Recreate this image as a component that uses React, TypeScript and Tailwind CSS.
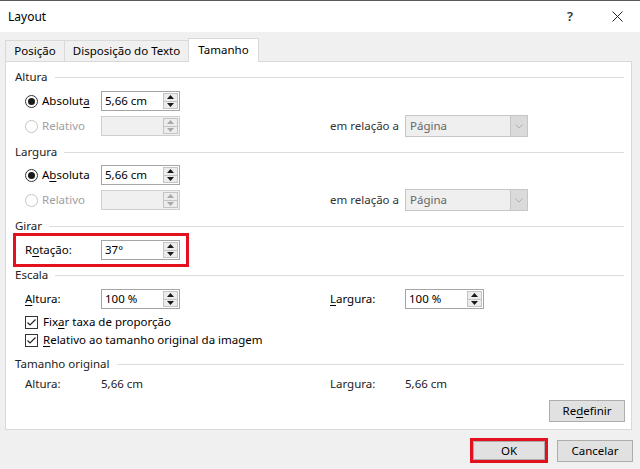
import React from "react";

const font = { fontFamily: '"Noto Sans", "Segoe UI", sans-serif' };

function U({ children }: { children: React.ReactNode }) {
  return <span className="underline underline-offset-2">{children}</span>;
}

function Spinner({ disabled }: { disabled?: boolean }) {
  const fill = disabled ? "#a8a8a8" : "#1a1a1a";
  return (
    <div className="flex h-[16px] w-[15px] flex-col">
      <div className="flex flex-1 items-center justify-center border border-[#c4c4c4] bg-[#ececec]">
        <svg width="7" height="4" viewBox="0 0 7 4">
          <path d="M0 4 L3.5 0 L7 4 Z" fill={fill} />
        </svg>
      </div>
      <div className="-mt-px flex flex-1 items-center justify-center border border-[#c4c4c4] bg-[#ececec]">
        <svg width="7" height="4" viewBox="0 0 7 4">
          <path d="M0 0 L7 0 L3.5 4 Z" fill={fill} />
        </svg>
      </div>
    </div>
  );
}

function SpinInput({ value, disabled }: { value?: string; disabled?: boolean }) {
  return (
    <div
      className={
        disabled
          ? "flex h-[20px] w-[79px] items-center justify-between border border-[#cfcfcf] bg-[#f0f0f0] pl-[4px] pr-[1px]"
          : "flex h-[20px] w-[79px] items-center justify-between border border-[#a5a5a5] bg-white pl-[3px] pr-[1px]"
      }
    >
      <span className="text-black">{value}</span>
      <Spinner disabled={disabled} />
    </div>
  );
}

function Radio({ checked, disabled }: { checked?: boolean; disabled?: boolean }) {
  return (
    <svg width="13" height="13" viewBox="0 0 13 13" className="shrink-0">
      <circle cx="6.5" cy="6.5" r="6" fill="white" stroke={disabled ? "#c4c4c4" : "#333"} />
      {checked && <circle cx="6.5" cy="6.5" r="3.5" fill="#1a1a1a" />}
    </svg>
  );
}

function Check() {
  return (
    <svg width="13" height="13" viewBox="0 0 13 13" className="shrink-0">
      <rect x="0.5" y="0.5" width="12" height="12" fill="white" stroke="#333" />
      <path d="M2.5 6.5 L5 9 L10.5 3.5" fill="none" stroke="#222" strokeWidth="1.2" />
    </svg>
  );
}

function Dropdown() {
  return (
    <div className="-my-px flex h-[22px] w-[123px] items-stretch border border-[#c6c6c6] bg-[#efefef]">
      <span className="flex flex-1 items-center pl-[4px] text-[#666]">Página</span>
      <div className="flex w-[17px] items-center justify-center border-l border-[#c6c6c6] bg-[#dadada]">
        <svg width="8" height="5" viewBox="0 0 8 5">
          <path d="M0.5 0.5 L4 4 L7.5 0.5" fill="none" stroke="#b0b0b0" />
        </svg>
      </div>
    </div>
  );
}

function Heading({ title, className }: { title: string; className?: string }) {
  return (
    <div className={"flex h-[16px] items-center pl-[9px] pr-[7px] text-[#222] " + (className ?? "")}>
      <span>{title}</span>
      <div className="ml-[7px] h-px flex-1 bg-[#dcdcdc]" />
    </div>
  );
}

function SizeRows({ second }: { second?: boolean }) {
  return (
    <>
      <div className={(second ? "mt-[5px]" : "mt-[6px]") + " flex h-[20px] items-center pl-[19px]"}>
        <div className="flex w-[76px] items-center gap-[4px]">
          <Radio checked />
          {second ? (
            <span>
              A<U>b</U>soluta
            </span>
          ) : (
            <span>
              Absolut<U>a</U>
            </span>
          )}
        </div>
        <SpinInput value="5,66 cm" />
      </div>
      <div className="mt-[5px] flex h-[20px] items-center pl-[19px]">
        <div className="flex w-[76px] items-center gap-[4px] text-[#a0a0a0]">
          <Radio disabled />
          <span>Relativo</span>
        </div>
        <SpinInput disabled />
        <span className="ml-[150px] w-[75px] text-[#333]">em relação a</span>
        <Dropdown />
      </div>
    </>
  );
}

export default function App() {
  return (
    <div
      className="flex h-[469px] w-[640px] flex-col overflow-hidden border-t border-[#5a5a5a] bg-[#f0f0f0] text-[11.5px] text-black"
      style={font}
    >
      {/* title bar */}
      <div className="flex h-[31px] items-center bg-white pl-[8px]">
        <span className="flex-1 text-[12px]">Layout</span>
        <span className="mr-[39px] text-[13px] font-semibold text-[#333]">?</span>
        <svg width="11" height="11" viewBox="0 0 11 11" className="mr-[17px]">
          <path d="M0.5 0.5 L10.5 10.5 M10.5 0.5 L0.5 10.5" stroke="#222" strokeWidth="1" />
        </svg>
      </div>

      {/* tabs */}
      <div className="mt-[7px] flex h-[22px] items-end pl-[5px]">
        <div className="flex h-[21px] w-[59px] items-center justify-center border-t border-l border-[#d9d9d9]">
          Posição
        </div>
        <div className="flex h-[21px] w-[124px] items-center justify-center border-t border-l border-[#d9d9d9]">
          Disposição do Texto
        </div>
        <div className="relative z-10 -mb-px flex h-[24px] w-[71px] items-center justify-center border-t border-r border-l border-[#d9d9d9] bg-white pb-[1px]">
          Tamanho
        </div>
      </div>

      {/* panel */}
      <div className="ml-[5px] flex h-[369px] w-[627px] flex-col border border-[#d9d9d9] bg-white">
        <Heading title="Altura" className="mt-[7px]" />
        <SizeRows />

        <Heading title="Largura" className="mt-[8px]" />
        <SizeRows second />

        <Heading title="Girar" className="mt-[8px]" />
        <div className="-mt-px ml-[7px] flex h-[34px] w-[176px] items-center border-[3px] border-[#e3101e] pl-[9px]">
          <span className="w-[76px]">
            R<U>o</U>tação:
          </span>
          <SpinInput value="37°" />
        </div>

        <Heading title="Escala" />
        <div className="mt-[6px] flex h-[20px] items-center pl-[19px]">
          <span className="w-[76px]">
            <U>A</U>ltura:
          </span>
          <SpinInput value="100 %" />
          <span className="ml-[150px] w-[75px]">
            <U>L</U>argura:
          </span>
          <SpinInput value="100 %" />
        </div>
        <div className="mt-[5px] flex h-[16px] items-center gap-[5px] pl-[19px]">
          <Check />
          <span>
            Fix<U>a</U>r taxa de proporção
          </span>
        </div>
        <div className="mt-[2px] flex h-[16px] items-center gap-[5px] pl-[19px]">
          <Check />
          <span>
            <U>R</U>elativo ao tamanho original da imagem
          </span>
        </div>

        <Heading title="Tamanho original" className="mt-[8px]" />
        <div className="mt-[4px] flex h-[16px] items-center pl-[19px] text-[#222]">
          <span className="w-[76px]">Altura:</span>
          <span className="w-[229px]">5,66 cm</span>
          <span className="w-[75px]">Largura:</span>
          <span>5,66 cm</span>
        </div>

        <div className="mt-[8px] flex justify-end pr-[6px]">
          <div className="flex h-[22px] w-[76px] items-center justify-center border border-[#adadad] bg-[#e1e1e1]">
            <span>
              Re<U>d</U>efinir
            </span>
          </div>
        </div>
      </div>

      {/* buttons */}
      <div className="mt-[8px] flex items-center justify-end pr-[7px]">
        <div className="flex h-[25px] w-[78px] border-[3px] border-[#e3101e]">
          <div className="flex flex-1 items-center justify-center border border-[#adadad] bg-[#e1e1e1]">OK</div>
        </div>
        <div className="ml-[9px] flex h-[22px] w-[76px] items-center justify-center border border-[#adadad] bg-[#e1e1e1]">
          Cancelar
        </div>
      </div>
    </div>
  );
}
